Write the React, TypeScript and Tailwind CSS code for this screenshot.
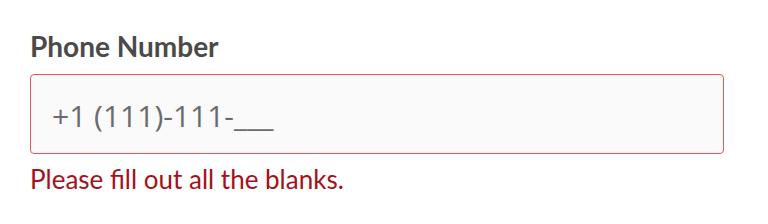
import React from 'react';

const App: React.FC = () => {
    return (
        <div className="w-[768px] h-[224px] bg-white px-[30px] pt-[28px]" style={{ fontFamily: 'Lato, sans-serif' }}>
            <label className="block text-[28px] font-bold text-[#4a4a4a] leading-[36px] mb-[10px]">Phone Number</label>
            <div className="w-[694px] h-[80px] rounded-[4px] border border-[#e05a5a] bg-[#fafafa] flex items-center px-[21px]">
                <span
                    className="text-[30px] text-[#6b6b6b] leading-[36px] pt-[4px]"
                    style={{ fontFamily: '"Open Sans", sans-serif' }}
                >
                    +1 (111)-111-___
                </span>
            </div>
            <p className="mt-[8px] text-[26px] text-[#a3121b] leading-[34px]">Please fill out all the blanks.</p>
        </div>
    );
};

export default App;
